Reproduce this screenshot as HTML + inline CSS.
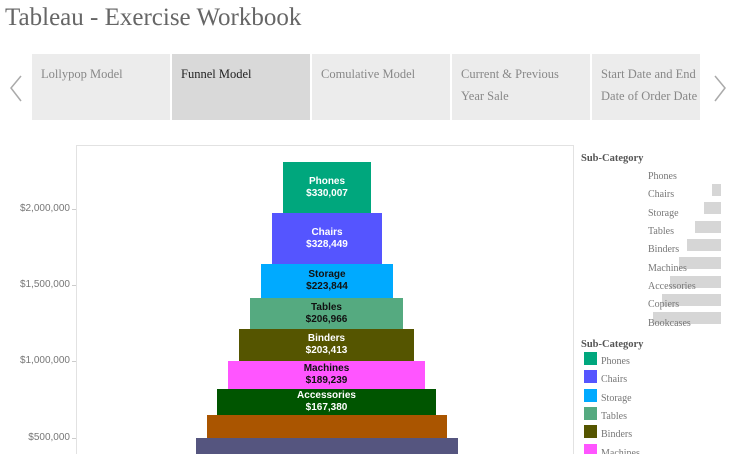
<!DOCTYPE html>
<html style="width:736px;height:454px;overflow:hidden"><head><meta charset="utf-8"><style>
*{margin:0;padding:0;box-sizing:border-box}
body{width:736px;height:454px;overflow:hidden;background:#fff;font-family:"Liberation Serif",serif;position:relative}
.a{position:absolute}
.tab{position:absolute;top:54px;height:66px;background:#ececec;color:#888;font-size:12.5px;line-height:21.5px;padding:10px 0 0 9px}
.ax{position:absolute;right:666px;font:10px "Liberation Sans",sans-serif;color:#777}
.tk{position:absolute;left:72px;width:4px;height:1px;background:#ccc}
.b{position:absolute;text-align:center;font:bold 10px/12px "Liberation Sans",sans-serif;color:#fff}
.lt{position:absolute;font-size:10px;color:#777}
.gb{position:absolute;background:#d6d6d6;height:12px;right:15px}
.sw{position:absolute;left:584px;width:13px;height:13px}
</style></head><body>
<div class="a" style="left:5px;top:4px;font-size:25px;color:#666">Tableau - Exercise Workbook</div>
<svg class="a" style="left:8px;top:74px" width="16" height="30"><path d="M13 2 L3 14 L13 27" stroke="#aaa" stroke-width="1.5" fill="none"/></svg>
<svg class="a" style="left:712px;top:74px" width="16" height="30"><path d="M3 2 L13 14 L3 27" stroke="#aaa" stroke-width="1.5" fill="none"/></svg>
<div class="tab" style="left:32px;width:138px">Lollypop Model</div>
<div class="tab" style="left:172px;width:138px;background:#d9d9d9;color:#222">Funnel Model</div>
<div class="tab" style="left:312px;width:138px">Comulative Model</div>
<div class="tab" style="left:452px;width:138px">Current &amp; Previous<br>Year Sale</div>
<div class="tab" style="left:592px;width:108px">Start Date and End<br>Date of Order Date</div>

<div class="a" style="left:76px;top:145px;width:498px;height:320px;border:1px solid #e2e2e2"></div>
<div class="ax" style="top:203px">$2,000,000</div><div class="tk" style="top:209px"></div>
<div class="ax" style="top:279px">$1,500,000</div><div class="tk" style="top:285px"></div>
<div class="ax" style="top:355px">$1,000,000</div><div class="tk" style="top:361px"></div>
<div class="ax" style="top:432px">$500,000</div><div class="tk" style="top:438px"></div>

<div class="b" style="left:283px;width:88px;top:162px;height:51px;background:#00a77d;padding-top:14px">Phones<br>$330,007</div>
<div class="b" style="left:272px;width:110px;top:213px;height:51px;background:#5555ff;padding-top:14px">Chairs<br>$328,449</div>
<div class="b" style="left:261px;width:132px;top:264px;height:34px;background:#00aaff;color:#111;padding-top:5px">Storage<br>$223,844</div>
<div class="b" style="left:250px;width:153px;top:298px;height:31px;background:#55aa80;color:#111;padding-top:4px">Tables<br>$206,966</div>
<div class="b" style="left:239px;width:175px;top:329px;height:32px;background:#555500;padding-top:4px">Binders<br>$203,413</div>
<div class="b" style="left:228px;width:197px;top:361px;height:28px;background:#ff55ff;color:#111;padding-top:2px">Machines<br>$189,239</div>
<div class="b" style="left:217px;width:219px;top:389px;height:26px;background:#005500;padding-top:1px">Accessories<br>$167,380</div>
<div class="b" style="left:207px;width:240px;top:415px;height:23px;background:#aa5500"></div>
<div class="b" style="left:196px;width:262px;top:438px;height:20px;background:#55557f"></div>

<div class="a" style="left:581px;top:153px;font-size:10.5px;font-weight:bold;color:#555">Sub-Category</div>
<div class="gb" style="top:184px;width:9px"></div>
<div class="gb" style="top:202px;width:17px"></div>
<div class="gb" style="top:221px;width:26px"></div>
<div class="gb" style="top:239px;width:34px"></div>
<div class="gb" style="top:257px;width:42px"></div>
<div class="gb" style="top:276px;width:51px"></div>
<div class="gb" style="top:294px;width:59px"></div>
<div class="gb" style="top:312px;width:68px"></div>
<div class="lt" style="left:648px;top:171px">Phones</div>
<div class="lt" style="left:648px;top:189px">Chairs</div>
<div class="lt" style="left:648px;top:208px">Storage</div>
<div class="lt" style="left:648px;top:226px">Tables</div>
<div class="lt" style="left:648px;top:244px">Binders</div>
<div class="lt" style="left:648px;top:263px">Machines</div>
<div class="lt" style="left:648px;top:281px">Accessories</div>
<div class="lt" style="left:648px;top:299px">Copiers</div>
<div class="lt" style="left:648px;top:318px">Bookcases</div>

<div class="a" style="left:581px;top:339px;font-size:10.5px;font-weight:bold;color:#555">Sub-Category</div>
<div class="sw" style="top:352px;background:#00a77d"></div><div class="lt" style="left:601px;top:356px">Phones</div>
<div class="sw" style="top:370px;background:#5555ff"></div><div class="lt" style="left:601px;top:374px">Chairs</div>
<div class="sw" style="top:389px;background:#00aaff"></div><div class="lt" style="left:601px;top:393px">Storage</div>
<div class="sw" style="top:407px;background:#55aa80"></div><div class="lt" style="left:601px;top:411px">Tables</div>
<div class="sw" style="top:425px;background:#555500"></div><div class="lt" style="left:601px;top:429px">Binders</div>
<div class="sw" style="top:444px;background:#ff55ff"></div><div class="lt" style="left:601px;top:448px">Machines</div>
</body></html>
